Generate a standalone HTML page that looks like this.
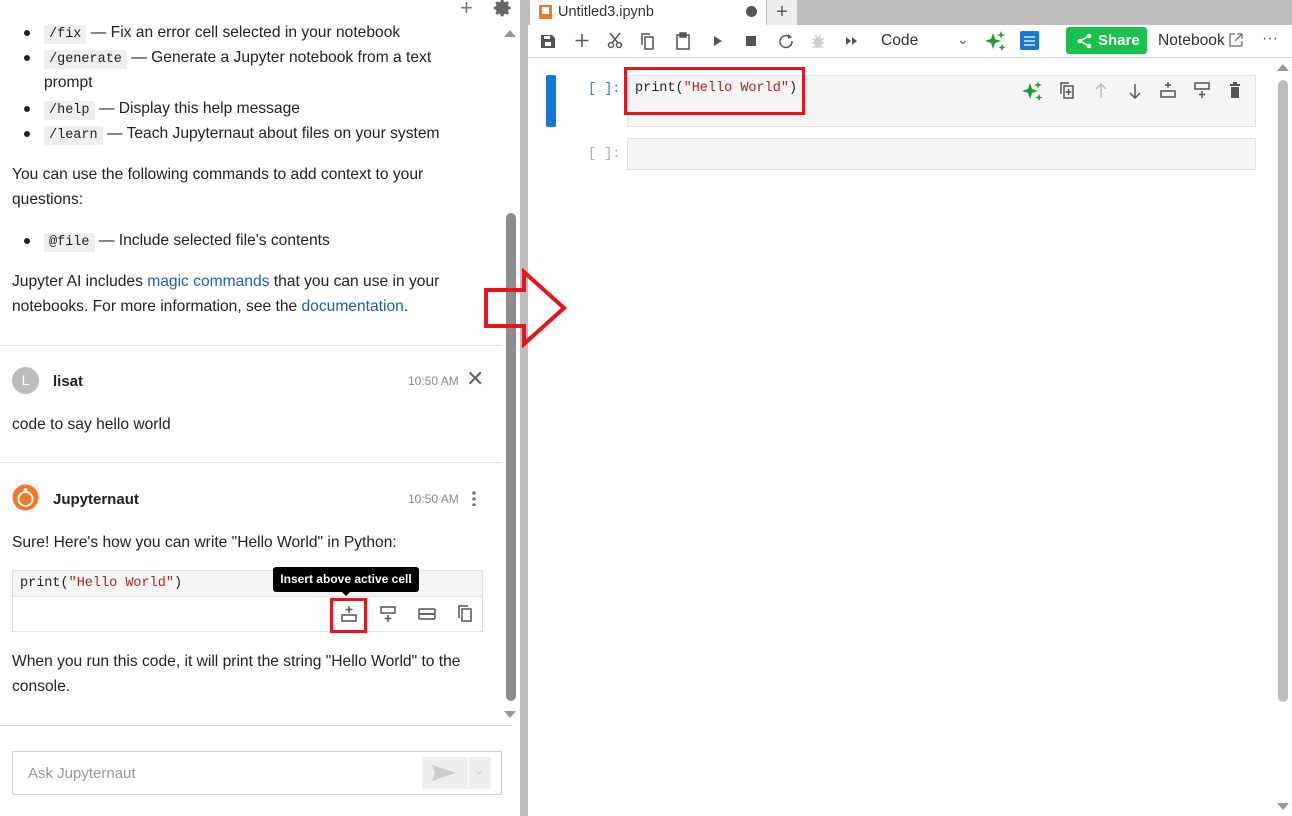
<!DOCTYPE html>
<html><head><meta charset="utf-8"><style>
*{box-sizing:border-box;margin:0;padding:0}
body{width:1292px;height:816px;overflow:hidden;background:#fff;font-family:"Liberation Sans",sans-serif;font-size:15.6px;color:#222;position:relative}
.a{position:absolute}
code,.mono{font-family:"Liberation Mono",monospace;font-size:13.5px}
code{background:#eee;padding:2px 5px}
.t{position:absolute;left:12px;line-height:25px;font-size:15.6px}
li{position:absolute;left:44px;line-height:25px;white-space:nowrap}
li:before{content:"";position:absolute;left:-20px;top:10px;width:6px;height:6px;border-radius:50%;background:#222}
a{color:#1a5fb4;text-decoration:none}
</style></head><body>
<!-- left panel -->
<div class="a" style="left:460px;top:0;font-size:22px;color:#777;line-height:16px">+</div>
<svg class="a" style="left:492px;top:-2px" width="22" height="20" viewBox="0 0 24 24"><path fill="#666" d="M12 8a4 4 0 1 0 0 8 4 4 0 0 0 0-8zm9 5.5v-3l-2.6-.6a7 7 0 0 0-.7-1.7l1.4-2.3-2.1-2.1-2.3 1.4a7 7 0 0 0-1.7-.7L12.5 2h-3l-.6 2.6a7 7 0 0 0-1.7.7L4.9 3.9 2.8 6l1.4 2.3a7 7 0 0 0-.7 1.7L1 10.5v3l2.6.6c.2.6.4 1.2.7 1.7l-1.4 2.3 2.1 2.1 2.3-1.4c.5.3 1.1.5 1.7.7l.5 2.5h3l.6-2.6c.6-.2 1.2-.4 1.700-.7l2.3 1.4 2.1-2.1-1.4-2.3c.3-.5.5-1.1.7-1.7z"/></svg>
<ul style="list-style:none">
<li style="top:20px"><code>/fix</code> — Fix an error cell selected in your notebook</li>
<li style="top:45px"><code>/generate</code> — Generate a Jupyter notebook from a text</li>
<li style="top:70px">prompt</li>
<li style="top:96px"><code>/help</code> — Display this help message</li>
<li style="top:121px"><code>/learn</code> — Teach Jupyternaut about files on your system</li>
<li style="top:228px"><code>@file</code> — Include selected file's contents</li>
</ul>
<style>li:nth-child(3):before{display:none}</style>
<div class="t" style="top:162px">You can use the following commands to add context to your<br>questions:</div>
<div class="t" style="top:269px">Jupyter AI includes <a>magic commands</a> that you can use in your<br>notebooks. For more information, see the <a>documentation</a>.</div>
<div class="a" style="left:0;top:345px;width:502px;height:1px;background:#e0e0e0"></div>
<div class="a" style="left:12px;top:367px;width:27px;height:27px;border-radius:50%;background:#bdbdbd;color:#fff;text-align:center;line-height:27px;font-size:14px">L</div>
<div class="a" style="left:53px;top:373px;font-weight:bold;font-size:15px">lisat</div>
<div class="a" style="left:408px;top:374px;font-size:12px;color:#888">10:50 AM</div>
<div class="a" style="left:466px;top:366px;font-size:22px;color:#666">✕</div>
<div class="t" style="top:412px">code to say hello world</div>
<div class="a" style="left:0;top:462px;width:502px;height:1px;background:#e0e0e0"></div>
<svg class="a" style="left:12px;top:484px" width="27" height="27" viewBox="0 0 27 27"><circle cx="13.5" cy="13.5" r="13" fill="#f37726"/><circle cx="13.5" cy="15" r="7" fill="none" stroke="#fff" stroke-width="2"/><circle cx="13.5" cy="6" r="1.8" fill="#fff"/></svg>
<div class="a" style="left:53px;top:491px;font-weight:bold;font-size:15px">Jupyternaut</div>
<div class="a" style="left:408px;top:492px;font-size:12px;color:#888">10:50 AM</div>
<div class="a" style="left:472px;top:490px;width:4px;height:16px;background:radial-gradient(circle,#777 1.6px,transparent 2px) 0 0/4px 6px"></div>
<div class="t" style="top:530px">Sure! Here's how you can write "Hello World" in Python:</div>
<div class="a" style="left:12px;top:570px;width:471px;height:62px;border:1px solid #e0e0e0"></div>
<div class="a" style="left:13px;top:571px;width:469px;height:26px;background:#f5f5f5;border-bottom:1px solid #e0e0e0"></div>
<div class="a mono" style="left:20px;top:576px">print(<span style="color:#ba2121">"Hello World"</span>)</div>
<div class="a" style="left:273px;top:567px;width:146px;height:25px;background:#000;color:#fff;font-size:12px;font-weight:bold;line-height:25px;text-align:center;border-radius:3px">Insert above active cell</div>
<div class="a" style="left:341px;top:591px;border:5px solid transparent;border-top-color:#000"></div>
<div class="a" style="left:330px;top:598px;width:37px;height:35px;border:3px solid #e8141c"></div>
<svg class="a" style="left:339px;top:604px" width="20" height="20" viewBox="0 0 20 20" fill="none" stroke="#555" stroke-width="1.5"><path d="M10 2v7M6.5 5.5h7"/><rect x="3" y="11" width="14" height="6"/></svg>
<svg class="a" style="left:378px;top:604px" width="20" height="20" viewBox="0 0 20 20" fill="none" stroke="#555" stroke-width="1.5"><rect x="3" y="3" width="14" height="6"/><path d="M10 11v7M6.5 14.5h7"/></svg>
<svg class="a" style="left:416px;top:604px" width="22" height="20" viewBox="0 0 22 20" fill="none" stroke="#555" stroke-width="1.5"><rect x="3" y="5" width="16" height="5" rx="1"/><rect x="3" y="10" width="16" height="5" rx="1"/></svg>
<svg class="a" style="left:455px;top:604px" width="20" height="20" viewBox="0 0 20 20" fill="none" stroke="#555" stroke-width="1.5"><path d="M4 14V2h9"/><rect x="7" y="5" width="9" height="12"/></svg>
<div class="t" style="top:649px">When you run this code, it will print the string "Hello World" to the<br>console.</div>
<div class="a" style="left:0;top:725px;width:512px;height:1px;background:#ccc"></div>
<div class="a" style="left:12px;top:751px;width:490px;height:44px;border:1px solid #ccc;border-radius:2px"></div>
<div class="a" style="left:28px;top:765px;color:#999;font-size:15px">Ask Jupyternaut</div>
<div class="a" style="left:422px;top:757px;width:46px;height:32px;background:#eee"></div>
<div class="a" style="left:469px;top:757px;width:22px;height:32px;background:#eee"></div>
<svg class="a" style="left:430px;top:763px" width="28" height="20" viewBox="0 0 28 20"><path d="M2 2l24 8-24 8 3-8z" fill="#ccc"/></svg>
<div class="a" style="left:474px;top:763px;color:#ccc;font-size:12px">⌄</div>
<!-- left scrollbar -->
<div class="a" style="left:504px;top:30px;border:6px solid transparent;border-bottom:7px solid #999;border-top:0"></div>
<div class="a" style="left:506px;top:213px;width:10px;height:488px;background:#8c8c8c;border-radius:5px"></div>
<div class="a" style="left:504px;top:711px;border:6px solid transparent;border-top:7px solid #999;border-bottom:0"></div>
<div class="a" style="left:520px;top:0;width:8px;height:816px;background:#bdbdbd"></div>
<!-- right -->
<div class="a" style="left:528px;top:0;width:764px;height:25px;background:#bdbdbd"></div>
<div class="a" style="left:530px;top:0;width:236px;height:25px;background:#fff"></div>
<div class="a" style="left:767px;top:0;width:30px;height:25px;background:#eee;text-align:center;font-size:20px;color:#555;line-height:24px">+</div>
<div class="a" style="left:539px;top:5px;width:13px;height:14px;background:#f37726"></div>
<div class="a" style="left:542px;top:7px;width:7px;height:7px;background:#fff"></div>
<div class="a" style="left:558px;top:4px;font-size:14.5px;color:#333">Untitled3.ipynb</div>
<div class="a" style="left:746px;top:6px;width:11px;height:11px;border-radius:50%;background:#555"></div>
<div class="a" style="left:528px;top:25px;width:764px;height:33px;background:#fff;border-bottom:1px solid #ccc"></div>
<svg class="a" style="left:538px;top:31px" width="330" height="20" viewBox="0 0 330 20"><g fill="#555" stroke="#555">
<path d="M3 4h11l3 3v10H3z" stroke="none"/><rect x="6" y="5" width="6" height="3" fill="#fff" stroke="none"/><rect x="7" y="11" width="6" height="4" fill="#fff" stroke="none"/>
<path d="M44 3v13M37.5 9.5h13" fill="none" stroke-width="1.5"/>
<g fill="none" stroke-width="1.5"><circle cx="73" cy="14" r="2.5"/><circle cx="81" cy="14" r="2.5"/><path d="M74 12l8-10M80 12l-8-10"/></g>
<g fill="none" stroke-width="1.5"><path d="M104 14V3h8"/><rect x="107" y="6" width="8" height="12"/></g>
<g fill="none" stroke-width="1.5"><rect x="139" y="4" width="12" height="14"/><rect x="142" y="2" width="6" height="4" fill="#555"/></g>
<path d="M176 5l8 5-8 5z" stroke="none"/>
<rect x="208" y="5" width="10" height="10" stroke="none"/>
<path d="M252 6a6 6 0 1 0 2 4" fill="none" stroke-width="1.5"/><path d="M250 3l4 3-4 2z" stroke="none"/>
<ellipse cx="280" cy="11" rx="4" ry="5" fill="#ccc" stroke="none"/><path d="M274 8h12M274 12h12M275 16h10M277 4l2 2M283 4l-2 2" stroke="#ccc" stroke-width="1.2"/>
<path d="M308 6l5 4-5 4zM314 6l5 4-5 4z" stroke="none"/></g></svg>
<div class="a" style="left:881px;top:32px;font-size:15.6px;color:#333">Code</div>
<div class="a" style="left:957px;top:31px;font-size:14px;color:#555">⌄</div>
<svg class="a" style="left:985px;top:30px" width="22" height="22" viewBox="0 0 22 22" fill="#1a9e2e"><path d="M8 3l2 6 6 2-6 2-2 6-2-6-6-2 6-2z"/><path d="M16 1l1 3 3 1-3 1-1 3-1-3-3-1 3-1zM17 14l1 2.5 2.5 1-2.5 1-1 2.5-1-2.5-2.5-1 2.5-1z"/></svg>
<div class="a" style="left:1020px;top:31px;width:19px;height:19px;background:#1976d2;border-radius:2px"></div>
<svg class="a" style="left:1020px;top:31px" width="19" height="19"><path d="M4 6h11M4 10h11M4 14h11" stroke="#fff" stroke-width="1.3"/></svg>
<div class="a" style="left:1066px;top:27px;width:81px;height:27px;background:#1ac14d;border-radius:3px;color:#fff;font-weight:bold;font-size:15px;line-height:27px;padding-left:32px">Share</div>
<svg class="a" style="left:1077px;top:33px" width="16" height="16" viewBox="0 0 16 16"><circle cx="12" cy="3" r="2.3" fill="#fff"/><circle cx="3" cy="8" r="2.3" fill="#fff"/><circle cx="12" cy="13" r="2.3" fill="#fff"/><path d="M12 3L3 8l9 5" stroke="#fff" stroke-width="1.5" fill="none"/></svg>
<div class="a" style="left:1158px;top:32px;font-size:15.6px;color:#333">Notebook</div>
<svg class="a" style="left:1228px;top:32px" width="16" height="16" fill="none" stroke="#666" stroke-width="1.2"><path d="M7 2H2v12h12V9M9 2h5v5M14 2L7 9"/></svg>
<div class="a" style="left:1262px;top:30px;font-size:16px;color:#555">···</div>
<!-- cells -->
<div class="a" style="left:546px;top:75px;width:10px;height:52px;background:#1976d2;border-radius:2px"></div>
<div class="a mono" style="left:588px;top:82px;color:#307fc1">[ ]:</div>
<div class="a" style="left:627px;top:75px;width:629px;height:52px;background:#f5f5f5;border:1px solid #e0e0e0"></div>
<div class="a mono" style="left:635px;top:81px;color:#222">print(<span style="color:#ba2121">"Hello World"</span>)</div>
<div class="a" style="left:624px;top:67px;width:181px;height:48px;border:3px solid #e8141c"></div>
<svg class="a" style="left:1022px;top:80px" width="220" height="22" viewBox="0 0 220 22"><g fill="#1a9e2e"><path d="M8 3l2 6 6 2-6 2-2 6-2-6-6-2 6-2z"/><path d="M16 1l1 3 3 1-3 1-1 3-1-3-3-1 3-1zM17 14l1 2.5 2.5 1-2.5 1-1 2.5-1-2.5-2.5-1 2.5-1z"/></g>
<g fill="none" stroke="#555" stroke-width="1.5"><path d="M39 14V3h8"/><rect x="42" y="6" width="9" height="12"/><path d="M46.5 9v6M43.5 12h6"/>
<path d="M79 4v14M74 9l5-5 5 5" stroke="#bbb"/><path d="M113 4v14M108 13l5 5 5-5"/>
<path d="M146 2v6M143 5h6"/><rect x="139" y="11" width="14" height="6"/>
<rect x="173" y="3" width="14" height="6"/><path d="M180 11v7M177 14.5h6"/></g>
<g fill="#555"><rect x="208" y="4" width="10" height="2"/><rect x="211" y="2" width="4" height="2"/><rect x="209" y="7" width="8" height="11"/></g></svg>
<div class="a mono" style="left:588px;top:147px;color:#aaa">[ ]:</div>
<div class="a" style="left:627px;top:138px;width:629px;height:32px;background:#f5f5f5;border:1px solid #e0e0e0"></div>
<!-- right scrollbar -->
<div class="a" style="left:1277px;top:64px;border:6px solid transparent;border-bottom:7px solid #999;border-top:0"></div>
<div class="a" style="left:1278px;top:80px;width:10px;height:622px;background:#bdbdbd;border-radius:5px"></div>
<div class="a" style="left:1277px;top:803px;border:6px solid transparent;border-top:7px solid #999;border-bottom:0"></div>
<!-- arrow -->
<svg class="a" style="left:483px;top:268px" width="86" height="80" viewBox="0 0 86 80"><path d="M3 22h38V4l40 36-40 36V58H3z" fill="none" stroke="#e8141c" stroke-width="4"/></svg>
</body></html>
